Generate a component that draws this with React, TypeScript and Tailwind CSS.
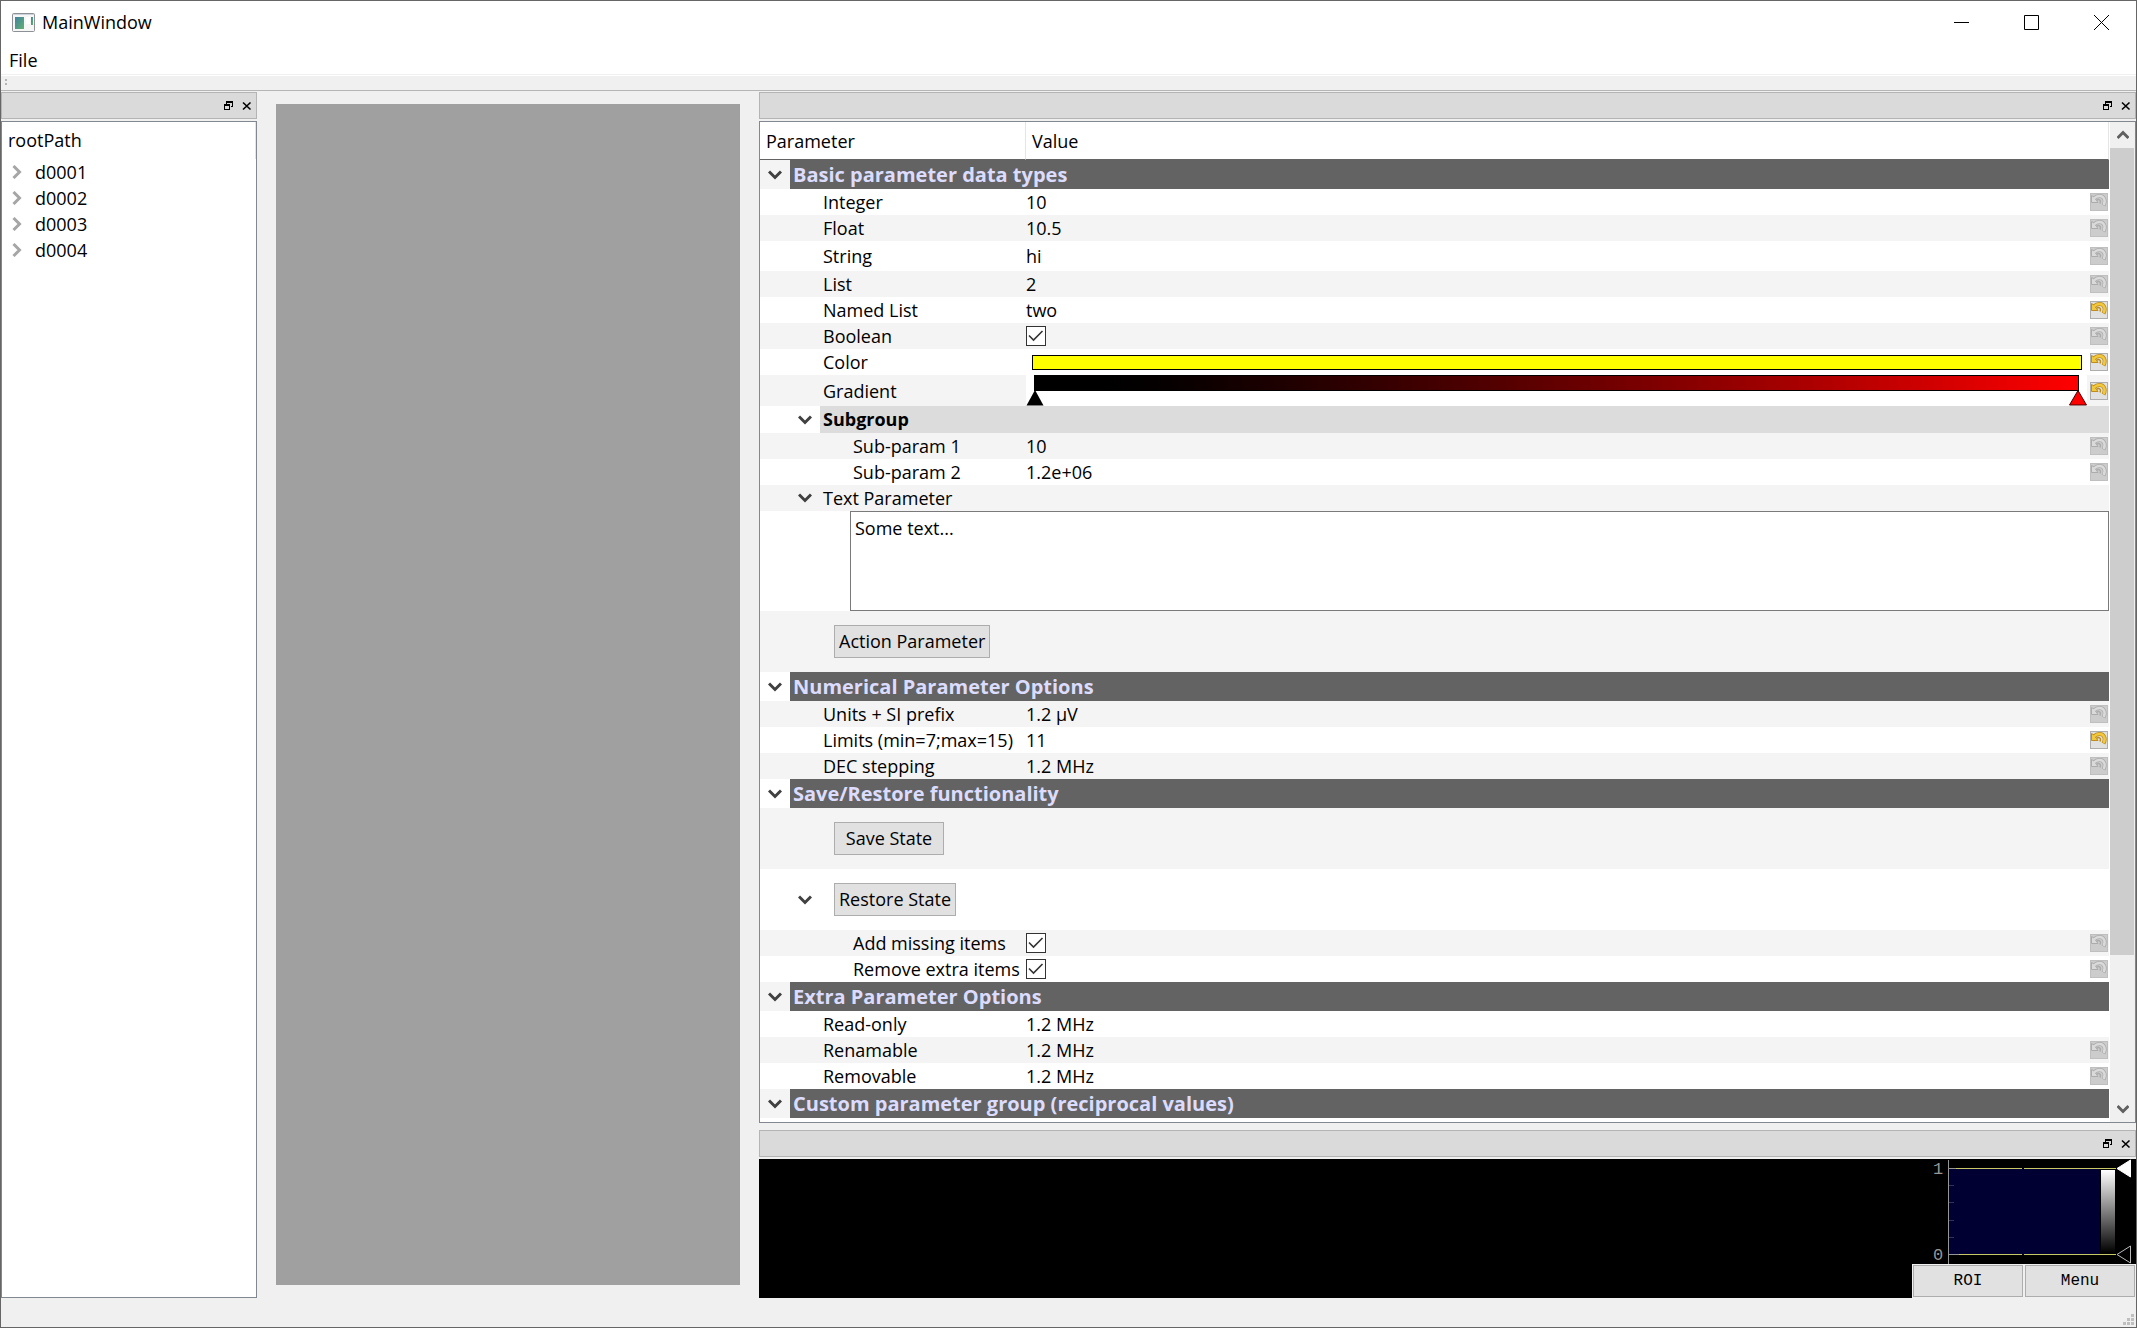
import React, { useState } from "react";

type Row =
  | { kind: "group"; label: string }
  | { kind: "subgroup"; label: string }
  | { kind: "text"; label: string; value: string }
  | { kind: "action"; label: string; expandable?: boolean }
  | {
      kind: "param";
      label: string;
      value?: string;
      control?: "check" | "color" | "gradient" | "tall";
      depth?: number;
      reset?: "on" | "off";
    };

const rows: Row[] = [
  { kind: "group", label: "Basic parameter data types" },
  { kind: "param", label: "Integer", value: "10", reset: "off" },
  { kind: "param", label: "Float", value: "10.5", reset: "off" },
  { kind: "param", label: "String", value: "hi", control: "tall", reset: "off" },
  { kind: "param", label: "List", value: "2", reset: "off" },
  { kind: "param", label: "Named List", value: "two", reset: "on" },
  { kind: "param", label: "Boolean", control: "check", reset: "off" },
  { kind: "param", label: "Color", control: "color", reset: "on" },
  { kind: "param", label: "Gradient", control: "gradient", reset: "on" },
  { kind: "subgroup", label: "Subgroup" },
  { kind: "param", label: "Sub-param 1", value: "10", depth: 1, reset: "off" },
  { kind: "param", label: "Sub-param 2", value: "1.2e+06", depth: 1, reset: "off" },
  { kind: "text", label: "Text Parameter", value: "Some text..." },
  { kind: "action", label: "Action Parameter" },
  { kind: "group", label: "Numerical Parameter Options" },
  { kind: "param", label: "Units + SI prefix", value: "1.2 µV", reset: "off" },
  { kind: "param", label: "Limits (min=7;max=15)", value: "11", reset: "on" },
  { kind: "param", label: "DEC stepping", value: "1.2 MHz", reset: "off" },
  { kind: "group", label: "Save/Restore functionality" },
  { kind: "action", label: "Save State" },
  { kind: "action", label: "Restore State", expandable: true },
  { kind: "param", label: "Add missing items", control: "check", depth: 1, reset: "off" },
  { kind: "param", label: "Remove extra items", control: "check", depth: 1, reset: "off" },
  { kind: "group", label: "Extra Parameter Options" },
  { kind: "param", label: "Read-only", value: "1.2 MHz" },
  { kind: "param", label: "Renamable", value: "1.2 MHz", reset: "off" },
  { kind: "param", label: "Removable", value: "1.2 MHz", reset: "off" },
  { kind: "group", label: "Custom parameter group (reciprocal values)" },
];

// Rows painted with the alternate background, by index
const shaded = new Set([0, 2, 4, 6, 8, 10, 12, 13, 15, 17, 19, 21, 23, 25, 27]);

function Chevron() {
  return (
    <button aria-label="Collapse" className="flex h-full w-[30px] shrink-0 items-center justify-center">
      <svg width="14" height="10" viewBox="0 0 14 10" fill="none" stroke="#404040" strokeWidth="3">
        <path d="M1 1.5 7 7.5 13 1.5" />
      </svg>
    </button>
  );
}

function ResetButton({ active }: { active: boolean }) {
  const edge = active ? "#bd8c1c" : "#acacac";
  const body = active ? "#f2c93c" : "#dadada";
  return (
    <button
      aria-label="Reset to default"
      disabled={!active}
      className={`h-[18px] w-[18px] shrink-0 border ${
        active ? "border-[#adadad] bg-[#e1e1e1]" : "border-[#bfbfbf] bg-[#cccccc]"
      }`}
    >
      <svg width="16" height="16" viewBox="0 0 16 16" fill="none">
        {/* outer sweep, arrow head, then the inner curl */}
        <path d="M3 4.500C6 1.500 11 1 13 4.500c1.200 2.200.8 4.500-.5 7" stroke={edge} strokeWidth="4" />
        <path d="M.5 1.500V8.500H7L5.500 6.500 3 3z" fill={body} stroke={edge} />
        <path d="M3 4.500C6 1.500 11 1 13 4.500c1.200 2 .8 4-.3 6.500" stroke={body} strokeWidth="2.400" />
        <path d="M5.500 6.500C8 4.500 10.500 6 9 9.500" stroke={edge} strokeWidth="1.400" />
      </svg>
    </button>
  );
}

function CheckBox({ label }: { label: string }) {
  const [checked, setChecked] = useState(true);
  return (
    <span className="relative flex h-5 w-5">
      <input
        type="checkbox"
        aria-label={label}
        checked={checked}
        onChange={() => setChecked(!checked)}
        className="h-5 w-5 appearance-none border border-[#333333] bg-white"
      />
      {checked && (
        <svg className="pointer-events-none absolute inset-0" width="20" height="20" fill="none" stroke="#333" strokeWidth="1.600">
          <path d="M3 9.500 7.500 14 16.500 5" />
        </svg>
      )}
    </span>
  );
}

function GradientEditor() {
  return (
    <div className="relative h-[31px] flex-1 bg-white pr-2 pl-2">
      <div className="h-4 border border-black bg-linear-to-r from-black to-[#ff0000]" />
      <svg className="absolute bottom-0 left-0" width="18" height="16">
        <path d="M9 0 17.500 15.500H.5z" fill="#000" />
      </svg>
      <svg className="absolute right-0 bottom-0" width="18" height="16">
        <path d="M9 0.500 17.500 15H.5z" fill="#f00" stroke="#400" />
      </svg>
    </div>
  );
}

function DockTitle() {
  return (
    <div className="flex h-[27px] shrink-0 items-center justify-end gap-2 border border-[#b4b4b4] bg-[#dadada] px-1">
      <button aria-label="Float">
        <svg width="10" height="10" viewBox="0 0 10 10" shapeRendering="crispEdges">
          <path d="M2 0h7v6H7V5h1V2H3v1H2z" />
          <path d="M0 3h6v6H0zM1 5v3h4V5z" fillRule="evenodd" />
        </svg>
      </button>
      <button aria-label="Close">
        <svg width="10" height="10" viewBox="0 0 10 10" stroke="#000" strokeWidth="1.600">
          <path d="M1 1.500 8.500 8.500M8.500 1.500 1 8.500" />
        </svg>
      </button>
    </div>
  );
}

function ParamRow({ row, index }: { row: Row; index: number }) {
  const bg = shaded.has(index) ? "bg-[#f4f4f4]" : "bg-white";

  if (row.kind === "group") {
    return (
      <tr className={`h-[29px] ${bg}`}>
        <td colSpan={2} className="p-0">
          <div className="flex h-[29px]">
            <Chevron />
            <div className="flex-1 bg-[#636363] pl-[3px] text-[20px] leading-[29px] font-bold text-[#dcdcff]">{row.label}</div>
          </div>
        </td>
      </tr>
    );
  }

  if (row.kind === "subgroup") {
    return (
      <tr className={`h-[27px] ${bg}`}>
        <td colSpan={2} className="p-0">
          <div className="flex h-[27px] pl-[30px]">
            <Chevron />
            <div className="flex-1 bg-[#dcdcdc] pl-[3px] leading-[27px] font-bold">{row.label}</div>
          </div>
        </td>
      </tr>
    );
  }

  if (row.kind === "text") {
    return (
      <>
        <tr className={`h-[26px] ${bg}`}>
          <td colSpan={2} className="p-0">
            <div className="flex h-[26px] pl-[30px]">
              <Chevron />
              <label htmlFor="text-param" className="pl-[3px] leading-[26px]">{row.label}</label>
            </div>
          </td>
        </tr>
        <tr className="h-[100px] bg-white">
          <td colSpan={2} className="p-0 pl-[90px]">
            <textarea
              id="text-param"
              defaultValue={row.value}
              className="block h-[100px] w-full resize-none border border-[#7a7a7a] bg-white px-1 py-[3px] leading-[26px]"
            />
          </td>
        </tr>
      </>
    );
  }

  if (row.kind === "action") {
    return (
      <tr className={`h-[61px] ${bg}`}>
        <td colSpan={2} className="p-0">
          <div className="flex h-[61px] items-center pl-[30px]">
            {row.expandable ? <Chevron /> : <span className="w-[30px]" />}
            <button className="ml-[14px] h-[33px] min-w-[110px] border border-[#adadad] bg-[#e1e1e1] px-1">
              {row.label}
            </button>
          </div>
        </td>
      </tr>
    );
  }

  const height =
    row.control === "tall" ? "h-[30px]" : row.control === "gradient" ? "h-[31px]" : "h-[26px]";

  return (
    <tr className={`${height} ${bg}`}>
      <td className={`p-0 leading-[26px] whitespace-nowrap ${row.depth ? "pl-[93px]" : "pl-[63px]"}`}>{row.label}</td>
      <td className="p-0">
        <div className="flex items-center pr-px">
          {row.control === "check" && <CheckBox label={row.label} />}
          {row.control === "color" && (
            <button aria-label="Pick color" className="mr-[5px] ml-[6px] h-[15px] flex-1 border border-black bg-[#ffff00]" />
          )}
          {row.control === "gradient" && <GradientEditor />}
          {row.value && <span className="leading-[26px]">{row.value}</span>}
          {row.control === "gradient" || row.control === "color" ? (
            <span className="w-[3px]" />
          ) : (
            <span className="flex-1" />
          )}
          {row.reset && <ResetButton active={row.reset === "on"} />}
        </div>
      </td>
    </tr>
  );
}

function ParameterTree() {
  return (
    <div className="mt-[2px] flex h-[1002px] border border-[#828790] bg-white">
      <div className="flex-1 pr-px">
        <table className="w-full table-fixed border-separate border-spacing-0">
          <colgroup>
            <col className="w-[266px]" />
            <col />
          </colgroup>
          <thead>
            <tr className="h-[38px] text-left">
              <th className="border-r border-b border-r-[#e5e5e5] border-b-[#636363] p-0 pt-px pl-[6px] font-normal">Parameter</th>
              <th className="border-r border-b border-r-[#e5e5e5] border-b-[#636363] p-0 pt-px pl-[6px] font-normal">Value</th>
            </tr>
          </thead>
          <tbody>
            {rows.map((row, i) => (
              <ParamRow key={i} row={row} index={i} />
            ))}
          </tbody>
        </table>
      </div>
      <div className="flex w-[25px] flex-col bg-[#f0f0f0]">
        <button aria-label="Scroll up" className="flex h-[26px] items-center justify-center">
          <svg width="12" height="10" fill="none" stroke="#606060" strokeWidth="3">
            <path d="M.5 8 6 2.500 11.500 8" />
          </svg>
        </button>
        <div className="mr-px h-[807px] bg-[#cdcdcd]" />
        <span className="flex-1" />
        <button aria-label="Scroll down" className="flex h-[26px] items-center justify-center">
          <svg width="12" height="10" fill="none" stroke="#606060" strokeWidth="3">
            <path d="M.5 2 6 7.500 11.500 2" />
          </svg>
        </button>
      </div>
    </div>
  );
}

function Histogram() {
  return (
    <svg width="224" height="105" className="block" shapeRendering="crispEdges">
      <rect width="224" height="105" fill="#000" />
      <rect x="37" y="10" width="151" height="86" fill="#000033" />
      <path d="M36.500 1V105" stroke="#969696" />
      <path d="M37 9.500H44M37 95.500H47" stroke="#969696" />
      <path d="M37 26.500h5M37 43.500h5M37 61.500h5M37 78.500h5" stroke="#333355" />
      <path d="M44 9.500H110M112 9.500H204M47 95.500H110M112 95.500H204" stroke="#c8c864" />
      <defs>
        <linearGradient id="levels" x1="0" y1="0" x2="0" y2="1">
          <stop offset="0" stopColor="#fff" />
          <stop offset="1" stopColor="#000" />
        </linearGradient>
      </defs>
      <rect x="188" y="10" width="16" height="85" fill="#000" />
      <rect x="189" y="11" width="14" height="83" fill="url(#levels)" />
      <g shapeRendering="auto">
        <path d="M205 9.500 218.500 1V18z" fill="#fff" stroke="#fff" />
        <path d="M205 95.500 218.500 87V104z" fill="#000" stroke="#bbb" />
      </g>
      <g fill="#969696" fontSize="17" fontFamily="'Liberation Mono', monospace">
        <text x="21" y="15">1</text>
        <text x="21" y="101">0</text>
      </g>
    </svg>
  );
}

function ImageView() {
  return (
    <div className="mt-[2px] flex h-[139px] justify-end bg-black">
      <div className="flex w-[224px] flex-col">
        <Histogram />
        <div className="flex flex-1 gap-[2px] bg-[#f0f0f0] p-px font-['Liberation_Mono',monospace] text-[16px]">
          <button className="flex-1 border border-[#adadad] bg-[#e1e1e1]">ROI</button>
          <button className="flex-1 border border-[#adadad] bg-[#e1e1e1]">Menu</button>
        </div>
      </div>
    </div>
  );
}

export default function App() {
  return (
    <div className="flex min-h-screen flex-col border border-[#666666] bg-[#f0f0f0] font-['Open_Sans','Noto_Sans',sans-serif] text-[18px] text-black">
      {/* Title bar */}
      <header className="flex h-[42px] items-center bg-white pl-[11px]">
        <svg width="23" height="19" viewBox="0 0 23 19">
          <defs>
            <linearGradient id="app" x1="0" y1="0" x2="1" y2="1">
              <stop offset="0" stopColor="#3f82a0" />
              <stop offset="1" stopColor="#62b070" />
            </linearGradient>
          </defs>
          <rect x=".5" y=".5" width="22" height="18" rx="1" fill="#f6f6f6" stroke="#8c9196" />
          <path d="M1 1.500h21" stroke="#ccd3dc" />
          <rect x="3" y="4" width="9" height="12" fill="url(#app)" />
          <rect x="14" y="4" width="4" height="7" fill="#fff" />
          <rect x="19" y="4" width="2" height="8" fill="url(#app)" />
        </svg>
        <h1 className="ml-[7px] flex-1">MainWindow</h1>
        <button aria-label="Minimize" className="flex w-[69px] justify-center">
          <svg width="15" height="15" stroke="#000"><path d="M0 7.500h15" /></svg>
        </button>
        <button aria-label="Maximize" className="flex w-[70px] justify-center">
          <svg width="15" height="15" fill="none" stroke="#000"><path d="M.5.5h14v14H.5z" /></svg>
        </button>
        <button aria-label="Close" className="flex w-[70px] justify-center">
          <svg width="15" height="15" stroke="#000"><path d="M0 0l15 15M15 0 0 15" /></svg>
        </button>
      </header>

      {/* Menu bar */}
      <nav className="flex h-8 items-start border-b border-[#f0f0f0] bg-white pl-2">
        <button className="leading-[34px]">File</button>
      </nav>

      {/* Tool bar */}
      <div className="h-4 border-t border-b border-t-white border-b-[#b5b5b5] pt-[3px] pl-1">
        <svg width="3" height="8" fill="#b4b4b4"><path d="M0 0h2v2H0zM0 4h2v2H0z" /></svg>
      </div>

      <main className="mt-px flex flex-1">
        <aside className="flex w-[256px] flex-col">
          <DockTitle />
          <div className="mt-[2px] flex-1 border border-[#828790] bg-white">
            <div className="flex h-[37px] items-center border-r border-[#e5e5e5] pl-[6px]">rootPath</div>
            <ul>
              {["d0001", "d0002", "d0003", "d0004"].map((name) => (
                <li key={name} className="flex h-[26px] items-center">
                  <button aria-label={`Expand ${name}`} className="flex w-[33px] pl-[10px]">
                    <svg width="11" height="14" fill="none" stroke="#a6a6a6" strokeWidth="3">
                      <path d="M1.500 1 7.500 7 1.500 13" />
                    </svg>
                  </button>
                  {name}
                </li>
              ))}
            </ul>
          </div>
        </aside>

        <section className="mt-3 mr-[19px] mb-[13px] ml-[19px] w-[464px] bg-[#a0a0a0]" />

        <section className="flex flex-1 flex-col">
          <DockTitle />
          <ParameterTree />
          <div className="h-[7px]" />
          <DockTitle />
          <ImageView />
        </section>
      </main>

      {/* Status bar */}
      <footer className="flex h-[29px] items-end justify-end p-[2px]">
        <svg width="11" height="11" fill="#bfbfbf">
          <path d="M8 0h3v3H8zM4 4h3v3H4zM8 4h3v3H8zM0 8h3v3H0zM4 8h3v3H4zM8 8h3v3H8z" />
        </svg>
      </footer>
    </div>
  );
}
